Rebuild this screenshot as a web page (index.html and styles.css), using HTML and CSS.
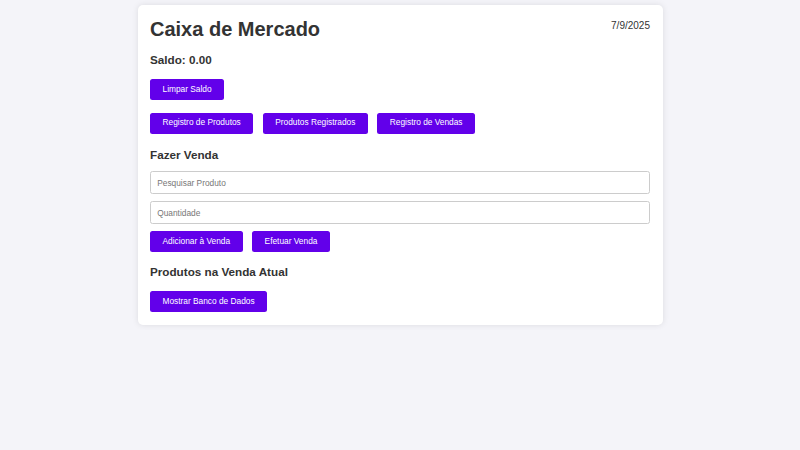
FILE: index.html
```html
<!DOCTYPE html>
<html lang="pt-BR">
<head>
    <meta charset="UTF-8">
    <meta name="viewport" content="width=device-width, initial-scale=1.0">
    <title>Caixa de Mercado</title>
    <link rel="stylesheet" href="styles.css">
</head>
<body>
    <div class="container">
        <header class="header">
            <h1>Caixa de Mercado</h1>
            <div class="date">7/9/2025</div>
        </header>

        <h3 class="saldo">Saldo: 0.00</h3>
        <div class="actions">
            <button>Limpar Saldo</button>
        </div>

        <div class="actions nav">
            <button>Registro de Produtos</button>
            <button>Produtos Registrados</button>
            <button>Registro de Vendas</button>
        </div>

        <h3 class="section-title">Fazer Venda</h3>
        <div class="form">
            <input type="text" placeholder="Pesquisar Produto">
            <input type="number" placeholder="Quantidade">
            <div class="actions">
                <button>Adicionar à Venda</button>
                <button>Efetuar Venda</button>
            </div>
        </div>

        <h3 class="section-title current">Produtos na Venda Atual</h3>
        <div class="actions db">
            <button>Mostrar Banco de Dados</button>
        </div>
    </div>
</body>
</html>
```

FILE: styles.css
```css
body {
    margin: 0;
    padding: 5px;
    background: #f4f4f9;
    font-family: "Liberation Sans", Arial, sans-serif;
    color: #333;
}
.container {
    max-width: 500px;
    margin: 0 auto;
    padding: 12.5px;
    background: #fff;
    border-radius: 5px;
    box-shadow: 0 0 6px rgba(0,0,0,0.1);
}
.header {
    display: flex;
    justify-content: space-between;
    align-items: flex-start;
}
h1 {
    margin: 0;
    font-size: 20px;
    line-height: 23px;
}
.date {
    margin-top: 2.5px;
    font-size: 10px;
    line-height: 11.5px;
}
h3 {
    font-size: 11.7px;
    line-height: 13.5px;
    margin: 0;
}
.saldo {
    margin-top: 12.5px;
}
.actions {
    display: flex;
    gap: 9.5px;
    margin-top: 12.5px;
}
button {
    font-family: "Liberation Sans", Arial, sans-serif;
    font-size: 8.33px;
    line-height: 9.5px;
    padding: 5.75px 12.5px;
    background: #6200ea;
    color: #fff;
    border: none;
    border-radius: 2.5px;
}
.section-title {
    margin-top: 14px;
}
.form {
    display: flex;
    flex-direction: column;
    gap: 7px;
    margin-top: 10.3px;
}
.form .actions {
    margin-top: 0;
}
input {
    box-sizing: border-box;
    width: 100%;
    height: 23px;
    padding: 0 6.25px;
    font-family: "Liberation Sans", Arial, sans-serif;
    font-size: 8.33px;
    border: 1px solid #ccc;
    border-radius: 2.5px;
    color: #333;
}
input::placeholder {
    color: #777;
}
input[type=number]::-webkit-inner-spin-button {
    -webkit-appearance: none;
}
.current {
    margin-top: 12.7px;
}
.db {
    margin-top: 13px;
}
```
